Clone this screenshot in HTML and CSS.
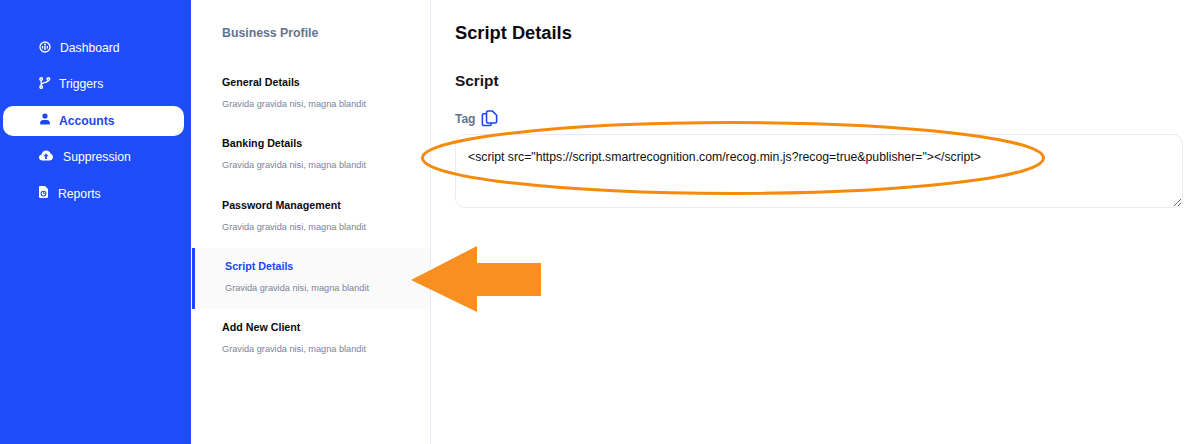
FILE: index.html
```html
<!DOCTYPE html>
<html lang="en">
<head>
<meta charset="utf-8">
<title>Script Details</title>
<link rel="stylesheet" href="styles.css">
</head>
<body>
<div class="app">
  <nav class="sidebar">
    <a class="nav-item"><svg class="nav-icon" viewBox="0 0 12 12"><circle cx="6" cy="6" r="5" fill="none" stroke="#fff" stroke-width="1.3"/><circle cx="6" cy="3.6" r="1" fill="#fff"/><rect x="5.3" y="5" width="1.4" height="4" fill="#fff"/><rect x="3" y="5" width="1.2" height="2.6" fill="#fff"/><rect x="7.8" y="5" width="1.2" height="2.6" fill="#fff"/></svg><span class="nav-label gap-a">Dashboard</span></a>
    <a class="nav-item"><svg class="nav-icon" viewBox="0 0 12 12"><g fill="none" stroke="#fff" stroke-width="1.400"><circle cx="2.200" cy="2" r="1.300"/><circle cx="2.200" cy="10" r="1.300"/><circle cx="9.400" cy="2" r="1.300"/><path d="M2.200 3.300v5.400M9.400 3.300c0 2.700-7.200 2-7.200 4.500"/></g></svg><span class="nav-label gap-b">Triggers</span></a>
    <a class="nav-item active"><svg class="nav-icon" viewBox="0 0 12 12"><circle cx="6" cy="3" r="2.600" fill="#1b47f5"/><path d="M1.200 11.500V9.400C1.200 7.800 2.600 6.900 4 6.900h4c1.400 0 2.800.9 2.800 2.500v2.100z" fill="#1b47f5"/></svg><span class="nav-label gap-b">Accounts</span></a>
    <a class="nav-item"><svg class="nav-icon wide" viewBox="0 0 14 11"><path d="M3.400 10.500C1.500 10.500 0 9.200 0 7.400c0-1.500 1-2.700 2.500-3C3 2 5 .5 7.200.5c2.200 0 3.900 1.300 4.500 3.300 1.300.4 2.300 1.700 2.300 3.200 0 1.900-1.500 3.500-3.400 3.500z" fill="#fff"/><path d="M7 3.400 4.300 6.200h1.800v2.700h1.800V6.200h1.800z" fill="#1f4dfb"/></svg><span class="nav-label gap-c">Suppression</span></a>
    <a class="nav-item"><svg class="nav-icon narrow" viewBox="0 0 9 12"><path d="M0 1.200C0 .5.500 0 1.200 0H6l3 3v7.800c0 .7-.5 1.200-1.200 1.200H1.200C.5 12 0 11.500 0 10.800z" fill="#fff"/><circle cx="4.500" cy="7.600" r="2.400" fill="none" stroke="#1f4dfb" stroke-width="1.100"/><path d="M4.500 5.800v1.800h1.700" fill="none" stroke="#1f4dfb" stroke-width=".8"/></svg><span class="nav-label gap-d">Reports</span></a>
  </nav>

  <aside class="panel">
    <h2 class="panel-title">Business Profile</h2>
    <ul class="menu">
      <li class="menu-item"><h3>General Details</h3><p>Gravida gravida nisi, magna blandit</p></li>
      <li class="menu-item"><h3>Banking Details</h3><p>Gravida gravida nisi, magna blandit</p></li>
      <li class="menu-item"><h3>Password Management</h3><p>Gravida gravida nisi, magna blandit</p></li>
      <li class="menu-item current"><h3>Script Details</h3><p>Gravida gravida nisi, magna blandit</p></li>
      <li class="menu-item"><h3>Add New Client</h3><p>Gravida gravida nisi, magna blandit</p></li>
    </ul>
  </aside>

  <main class="content">
    <h1>Script Details</h1>
    <h2 class="section">Script</h2>
    <div class="tag-row">
      <span class="tag">Tag</span>
      <svg class="copy" viewBox="0 0 16 16"><g fill="none" stroke="#1b47f5" stroke-width="1.500" stroke-linejoin="round"><path d="M5.200 3.500H2.600c-.8 0-1.300.5-1.300 1.300v8.500c0 .8.500 1.300 1.300 1.300h5.600c.8 0 1.300-.5 1.300-1.300v-1"/><path d="M5.200 2.300c0-.7.500-1.300 1.300-1.300h4.300l3.900 3.900v6c0 .8-.6 1.300-1.300 1.300H6.500c-.8 0-1.300-.5-1.300-1.300z"/></g></svg>
    </div>
    <textarea class="code" readonly>&lt;script src="https://script.smartrecognition.com/recog.min.js?recog=true&amp;publisher="&gt;&lt;/script&gt;</textarea>
  </main>

  <svg class="mark-ellipse" viewBox="0 0 630 78"><ellipse cx="315" cy="39" rx="310.500" ry="35.500" fill="none" stroke="#f58a0b" stroke-width="3"/></svg>
  <svg class="mark-arrow" viewBox="0 0 130 66"><path d="M0 34 66 0V17H130V50H66V66z" fill="#f79020"/></svg>
</div>
</body>
</html>
```

FILE: styles.css
```css
* { box-sizing: border-box; }
html, body { margin: 0; height: 444px; overflow: hidden; background: #fff; }
body { font-family: "Liberation Sans", Arial, sans-serif; }

.app { position: relative; display: flex; height: 444px; }

.sidebar {
  width: 191px;
  flex: none;
  background: #1f4dfb;
  padding: 33px 7px 0 3px;
  display: flex;
  flex-direction: column;
  gap: 6.400px;
}
.nav-item {
  height: 30px;
  display: flex;
  align-items: center;
  padding-left: 36px;
  border-radius: 10px;
  color: #fff;
  font-size: 12.200px;
}
.nav-icon { width: 12px; height: 12px; margin-top: -3px; flex: none; }
.nav-icon.wide { width: 14px; height: 11px; }
.nav-icon.narrow { width: 9px; height: 12px; }
.nav-item.active { background: #fff; color: #1b47f5; font-weight: 700; }
.gap-a { margin-left: 9px; }
.gap-b { margin-left: 8px; }
.gap-c { margin-left: 10px; }
.gap-d { margin-left: 10px; }

.panel {
  width: 240px;
  flex: none;
  border-left: 1px solid #fff;
  border-right: 1px solid #e9ecf6;
}
.panel-title {
  margin: 26px 0 0 30px;
  font-size: 12.300px;
  line-height: 15px;
  font-weight: 700;
  color: #64748f;
}
.menu { list-style: none; margin: 23px 0 0; padding: 0; }
.menu-item { height: 61.250px; padding: 12px 0 0 30px; }
.menu-item h3 { margin: 0; font-size: 10.700px; line-height: 13px; font-weight: 700; color: #0b0b0f; }
.menu-item p { margin: 10px 0 0; font-size: 9.200px; line-height: 11px; color: #7a8499; }
.menu-item.current { background: #fafafa; border-left: 3px solid #1b47f5; padding-left: 30px; }
.menu-item.current h3 { color: #1b47f5; }

.content { flex: 1; padding: 23px 17px 0 24px; min-width: 0; }
.content h1 { margin: 0; font-size: 18.300px; line-height: 20px; font-weight: 700; color: #0b0b0f; }
.section { margin: 29px 0 0; font-size: 15.400px; line-height: 18px; font-weight: 700; color: #14141a; }
.tag-row { display: flex; align-items: center; gap: 6px; margin-top: 20px; height: 18px; }
.tag { font-size: 12px; font-weight: 700; color: #64748f; }
.copy { width: 17px; height: 17px; margin-top: -2px; }
.code {
  display: block;
  width: 100%;
  height: 74px;
  margin-top: 6px;
  padding: 15px 12px;
  border: 1px solid #e8ebf3;
  border-radius: 10px;
  background: #fff;
  font-family: "Liberation Sans", Arial, sans-serif;
  font-size: 12.260px;
  line-height: 15px;
  color: #111;
  outline: none;
}

.mark-ellipse { position: absolute; left: 418px; top: 118.500px; width: 630px; height: 78px; }
.mark-arrow { position: absolute; left: 411px; top: 246px; width: 130px; height: 66px; }
```
